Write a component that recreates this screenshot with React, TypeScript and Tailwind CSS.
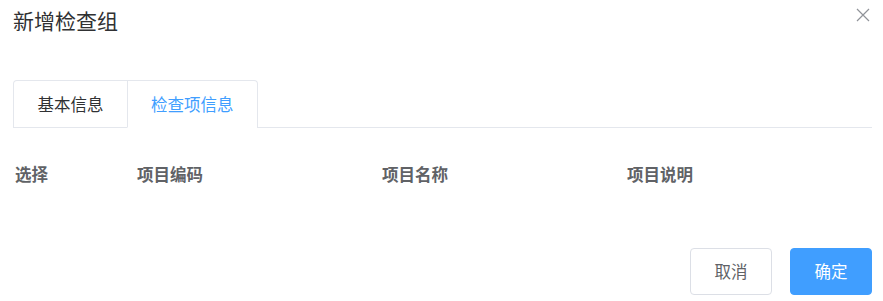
const font = { fontFamily: '"Noto Sans CJK SC", "Noto Sans", sans-serif' };

function CloseIcon() {
  return (
    <svg width="14" height="14" viewBox="0 0 14 14" fill="none" stroke="currentColor" strokeWidth="1.2">
      <path d="M1 1L13 13M13 1L1 13" />
    </svg>
  );
}

export default function App() {
  return (
    <div
      className="relative w-[883px] h-[301px] bg-white pl-[13px] pr-[11px] text-[#303133]"
      style={font}
    >
      {/* Header */}
      <div className="h-[40px] flex items-center">
        <h1 className="text-[21px] leading-none">新增检查组</h1>
      </div>
      <button className="absolute top-[8px] right-[13px] text-[#909399]">
        <CloseIcon />
      </button>

      {/* Tabs */}
      <div className="mt-[40px] flex border-b border-[#E4E7ED]">
        <div className="flex border border-b-0 border-[#E4E7ED] rounded-t-[4px] -mb-px">
          <div className="h-[47px] px-[23.5px] flex items-center text-[16.5px] leading-none text-[#303133] border-b border-[#E4E7ED]">
            基本信息
          </div>
          <div className="h-[47px] px-[23px] flex items-center text-[16.5px] leading-none text-[#409EFF] border-l border-b border-l-[#E4E7ED] border-b-white">
            检查项信息
          </div>
        </div>
      </div>

      {/* Table header */}
      <div className="mt-[22px] h-[48px] grid grid-cols-[124px_245px_245px_1fr] items-center text-[16.5px] font-bold leading-none text-[#606266]">
        <div className="pl-[2px]">选择</div>
        <div>项目编码</div>
        <div>项目名称</div>
        <div>项目说明</div>
      </div>

      {/* Footer */}
      <div className="mt-[50px] flex justify-end gap-[18px]">
        <button className="w-[82px] h-[47px] rounded-[4px] border border-[#DCDFE6] bg-white text-[16.5px] leading-none text-[#606266]">
          取消
        </button>
        <button className="w-[82px] h-[47px] rounded-[4px] border border-[#409EFF] bg-[#409EFF] text-[16.5px] leading-none text-white">
          确定
        </button>
      </div>
    </div>
  );
}
